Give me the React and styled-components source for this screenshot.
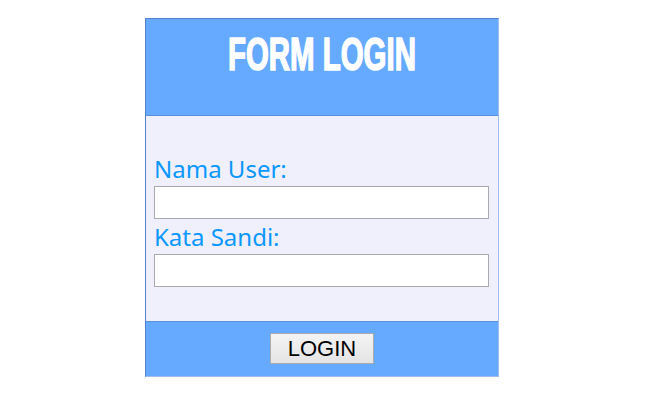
import React from 'react';
import styled, { createGlobalStyle } from 'styled-components';

const GlobalStyle = createGlobalStyle`
  body {
    margin: 8px;
    background: #ffffff;
    font-family: 'Liberation Sans', Arial, sans-serif;
  }
`;

const Card = styled.form`
  box-sizing: border-box;
  width: 354px;
  margin: 10px 0 0 137px;
  border-style: solid;
  border-width: 1px;
  border-color: #5583cf #9fc0ee #9fc0ee #5583cf;
  display: flex;
  flex-direction: column;
`;

const Header = styled.div`
  box-sizing: border-box;
  height: 97px;
  padding-top: 12px;
  background: #66aaff;
  border-bottom: 1px solid #5d8fdb;
  text-align: center;
`;

const Title = styled.h1`
  display: inline-block;
  margin: 0;
  font-family: 'Liberation Sans', Arial, sans-serif;
  font-weight: 700;
  font-size: 46px;
  line-height: 46px;
  color: #ffffff;
  -webkit-text-stroke: 1.6px #ffffff;
  transform: scaleX(0.64);
  transform-origin: center;
`;

const Body = styled.div`
  box-sizing: border-box;
  height: 206px;
  padding: 38px 9px 0 8px;
  background: #f0f0fc;
  border-bottom: 1px solid #5d8fdb;
  display: flex;
  flex-direction: column;
`;

const Label = styled.label`
  font-family: 'Noto Sans', 'Open Sans', sans-serif;
  font-size: 24px;
  line-height: 30px;
  color: #0a98ff;
  margin-top: ${(p) => (p.$first ? '0' : '3px')};
`;

const Input = styled.input`
  box-sizing: border-box;
  width: 335px;
  height: 33px;
  margin: 2px 0 0 0;
  padding: 0 4px;
  border: 1px solid #a9a9ae;
  background: #ffffff;
  font-family: 'Liberation Sans', Arial, sans-serif;
  font-size: 16px;
  outline: none;
`;

const Footer = styled.div`
  box-sizing: border-box;
  height: 54px;
  background: #66aaff;
  display: flex;
  justify-content: center;
  align-items: flex-start;
  padding-top: 11px;
`;

const Button = styled.button`
  box-sizing: border-box;
  width: 104px;
  height: 31px;
  padding: 0;
  border: 1px solid #ababab;
  border-radius: 1px;
  background: linear-gradient(#f4f4f4, #e4e4e4);
  font-family: 'Liberation Sans', Arial, sans-serif;
  font-size: 22px;
  line-height: 29px;
  color: #000000;
  cursor: pointer;
`;

export default function App() {
  return (
    <>
      <GlobalStyle />
      <Card onSubmit={(e) => e.preventDefault()}>
        <Header>
          <Title>FORM LOGIN</Title>
        </Header>
        <Body>
          <Label $first htmlFor="user">Nama User:</Label>
          <Input id="user" type="text" />
          <Label htmlFor="pass">Kata Sandi:</Label>
          <Input id="pass" type="password" />
        </Body>
        <Footer>
          <Button type="submit">LOGIN</Button>
        </Footer>
      </Card>
    </>
  );
}
